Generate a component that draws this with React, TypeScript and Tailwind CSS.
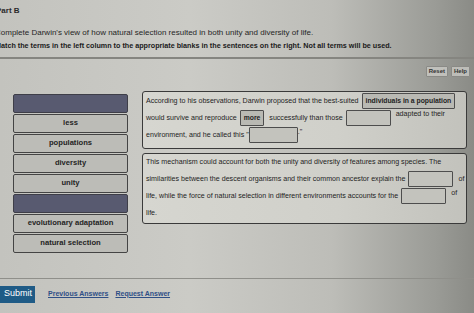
import React from 'react'

const terms: { label: string; used?: boolean }[] = [
  { label: '', used: true },
  { label: 'less' },
  { label: 'populations' },
  { label: 'diversity' },
  { label: 'unity' },
  { label: '', used: true },
  { label: 'evolutionary adaptation' },
  { label: 'natural selection' },
]

function Blank({ className = '' }: { className?: string }) {
  return (
    <span
      className={`inline-block h-[16px] w-[45px] shrink-0 rounded-[1px] border border-[#4d4d4d] bg-[#c3c3bd] ${className}`}
    />
  )
}

function Chip({ children }: { children: React.ReactNode }) {
  return (
    <span className="inline-flex h-[16px] shrink-0 items-center rounded-[1px] border border-[#4d4d4d] bg-[#b9b9b3] px-[3px] text-[6.8px] font-bold text-[#222]">
      {children}
    </span>
  )
}

export default function App() {
  return (
    <div className="relative h-[313px] w-[474px] overflow-hidden bg-[linear-gradient(90deg,#c3c3be_0%,#cbcbc6_40%,#bdbdb8_70%,#9a9b96_92%,#8a8b86_100%)] font-['Liberation_Sans',Arial,sans-serif] text-[#1c1c1c]">
      <div className="-ml-[7px] flex w-[481px] flex-col">
        {/* Header */}
        <div className="pt-[6px] pl-[3px] text-[8px] font-bold leading-[10px] text-[#2a2a2a]">Part B</div>
        <p className="mt-[12px] pl-[2px] text-[8px] leading-[9px] text-[#262626]">
          Complete Darwin's view of how natural selection resulted in both unity and diversity of life.
        </p>
        <p className="mt-[4px] pl-[2px] text-[7.2px] font-bold leading-[9px] text-[#1a1a1a]">
          Match the terms in the left column to the appropriate blanks in the sentences on the right. Not all terms will
          be used.
        </p>
        <div className="mt-[7px] h-[1.5px] bg-[#858580]" />

        {/* Reset / Help */}
        <div className="mt-[7px] flex justify-end gap-[3px] pr-[4px]">
          <span className="flex h-[11px] items-center rounded-[1px] border border-[#8a8a86] bg-[#c0c0bb] px-[2px] text-[6px] font-bold text-[#333]">
            Reset
          </span>
          <span className="flex h-[11px] items-center rounded-[1px] border border-[#8a8a86] bg-[#bdbdb8] px-[2px] text-[6px] font-bold text-[#333]">
            Help
          </span>
        </div>

        {/* Main */}
        <div className="mt-[14px] flex items-start gap-[14px] pl-[20px]">
          <div className="mt-[3px] flex w-[115px] flex-col gap-[1px]">
            {terms.map((t, i) =>
              t.used ? (
                <div key={i} className="h-[19px] rounded-[2px] border border-[#3e3e48] bg-[#585a70]" />
              ) : (
                <div
                  key={i}
                  className="flex h-[19px] items-center justify-center rounded-[2px] border border-[#444] bg-[#bcbcb7] text-[7.6px] font-bold text-[#242424]"
                >
                  {t.label}
                </div>
              ),
            )}
          </div>

          <div className="flex w-[325px] flex-col gap-[4px] text-[7.1px] text-[#1e1e1e]">
            <div className="rounded-[3px] border-[1.5px] border-[#3a3a3a] bg-[linear-gradient(90deg,#d6d6d0_0%,#d0d0ca_60%,#c2c2bc_100%)] pt-[1px] pb-[4px] pl-[3px]">
              <div className="flex h-[17px] items-center gap-[3px]">
                <span>According to his observations, Darwin proposed that the best-suited</span>
                <Chip>individuals in a population</Chip>
              </div>
              <div className="flex h-[17px] items-center">
                <span>would survive and reproduce</span>
                <span className="ml-[3px]">
                  <Chip>more</Chip>
                </span>
                <span className="ml-[5px]">successfully than those</span>
                <Blank className="ml-[3px]" />
                <span className="ml-[5px] -translate-y-[4px]">adapted to their</span>
              </div>
              <div className="flex h-[17px] items-center">
                <span>environment, and he called this "</span>
                <Blank className="w-[49px]" />
                <span className="-translate-y-[3px]">."</span>
              </div>
            </div>

            <div className="rounded-[3px] border-[1.5px] border-[#3a3a3a] bg-[linear-gradient(90deg,#d6d6d0_0%,#d0d0ca_60%,#c2c2bc_100%)] pb-[1px] pl-[3px]">
              <div className="flex h-[17px] items-center">
                <span>This mechanism could account for both the unity and diversity of features among species. The</span>
              </div>
              <div className="flex h-[17px] items-center">
                <span>similarities between the descent organisms and their common ancestor explain the</span>
                <Blank className="ml-[3px]" />
                <span className="ml-[5px]">of</span>
              </div>
              <div className="flex h-[17px] items-center">
                <span>life, while the force of natural selection in different environments accounts for the</span>
                <Blank className="ml-[3px]" />
                <span className="ml-[5px] -translate-y-[3px]">of</span>
              </div>
              <div className="flex h-[17px] items-center">
                <span>life.</span>
              </div>
            </div>
          </div>
        </div>

        {/* Footer */}
        <div className="mt-[25px] h-[1px] bg-[#8f8f8a]" />
        <div className="mt-[7px] flex items-center gap-[13px]">
          <span className="flex h-[17px] w-[42px] items-center justify-end bg-[#1f5b86] pr-[3px] text-[9px] text-white">
            Submit
          </span>
          <span className="text-[7px] font-bold text-[#2f4f86] underline">Previous Answers</span>
          <span className="-ml-[6px] text-[7px] font-bold text-[#2f4f86] underline">Request Answer</span>
        </div>
      </div>
    </div>
  )
}
